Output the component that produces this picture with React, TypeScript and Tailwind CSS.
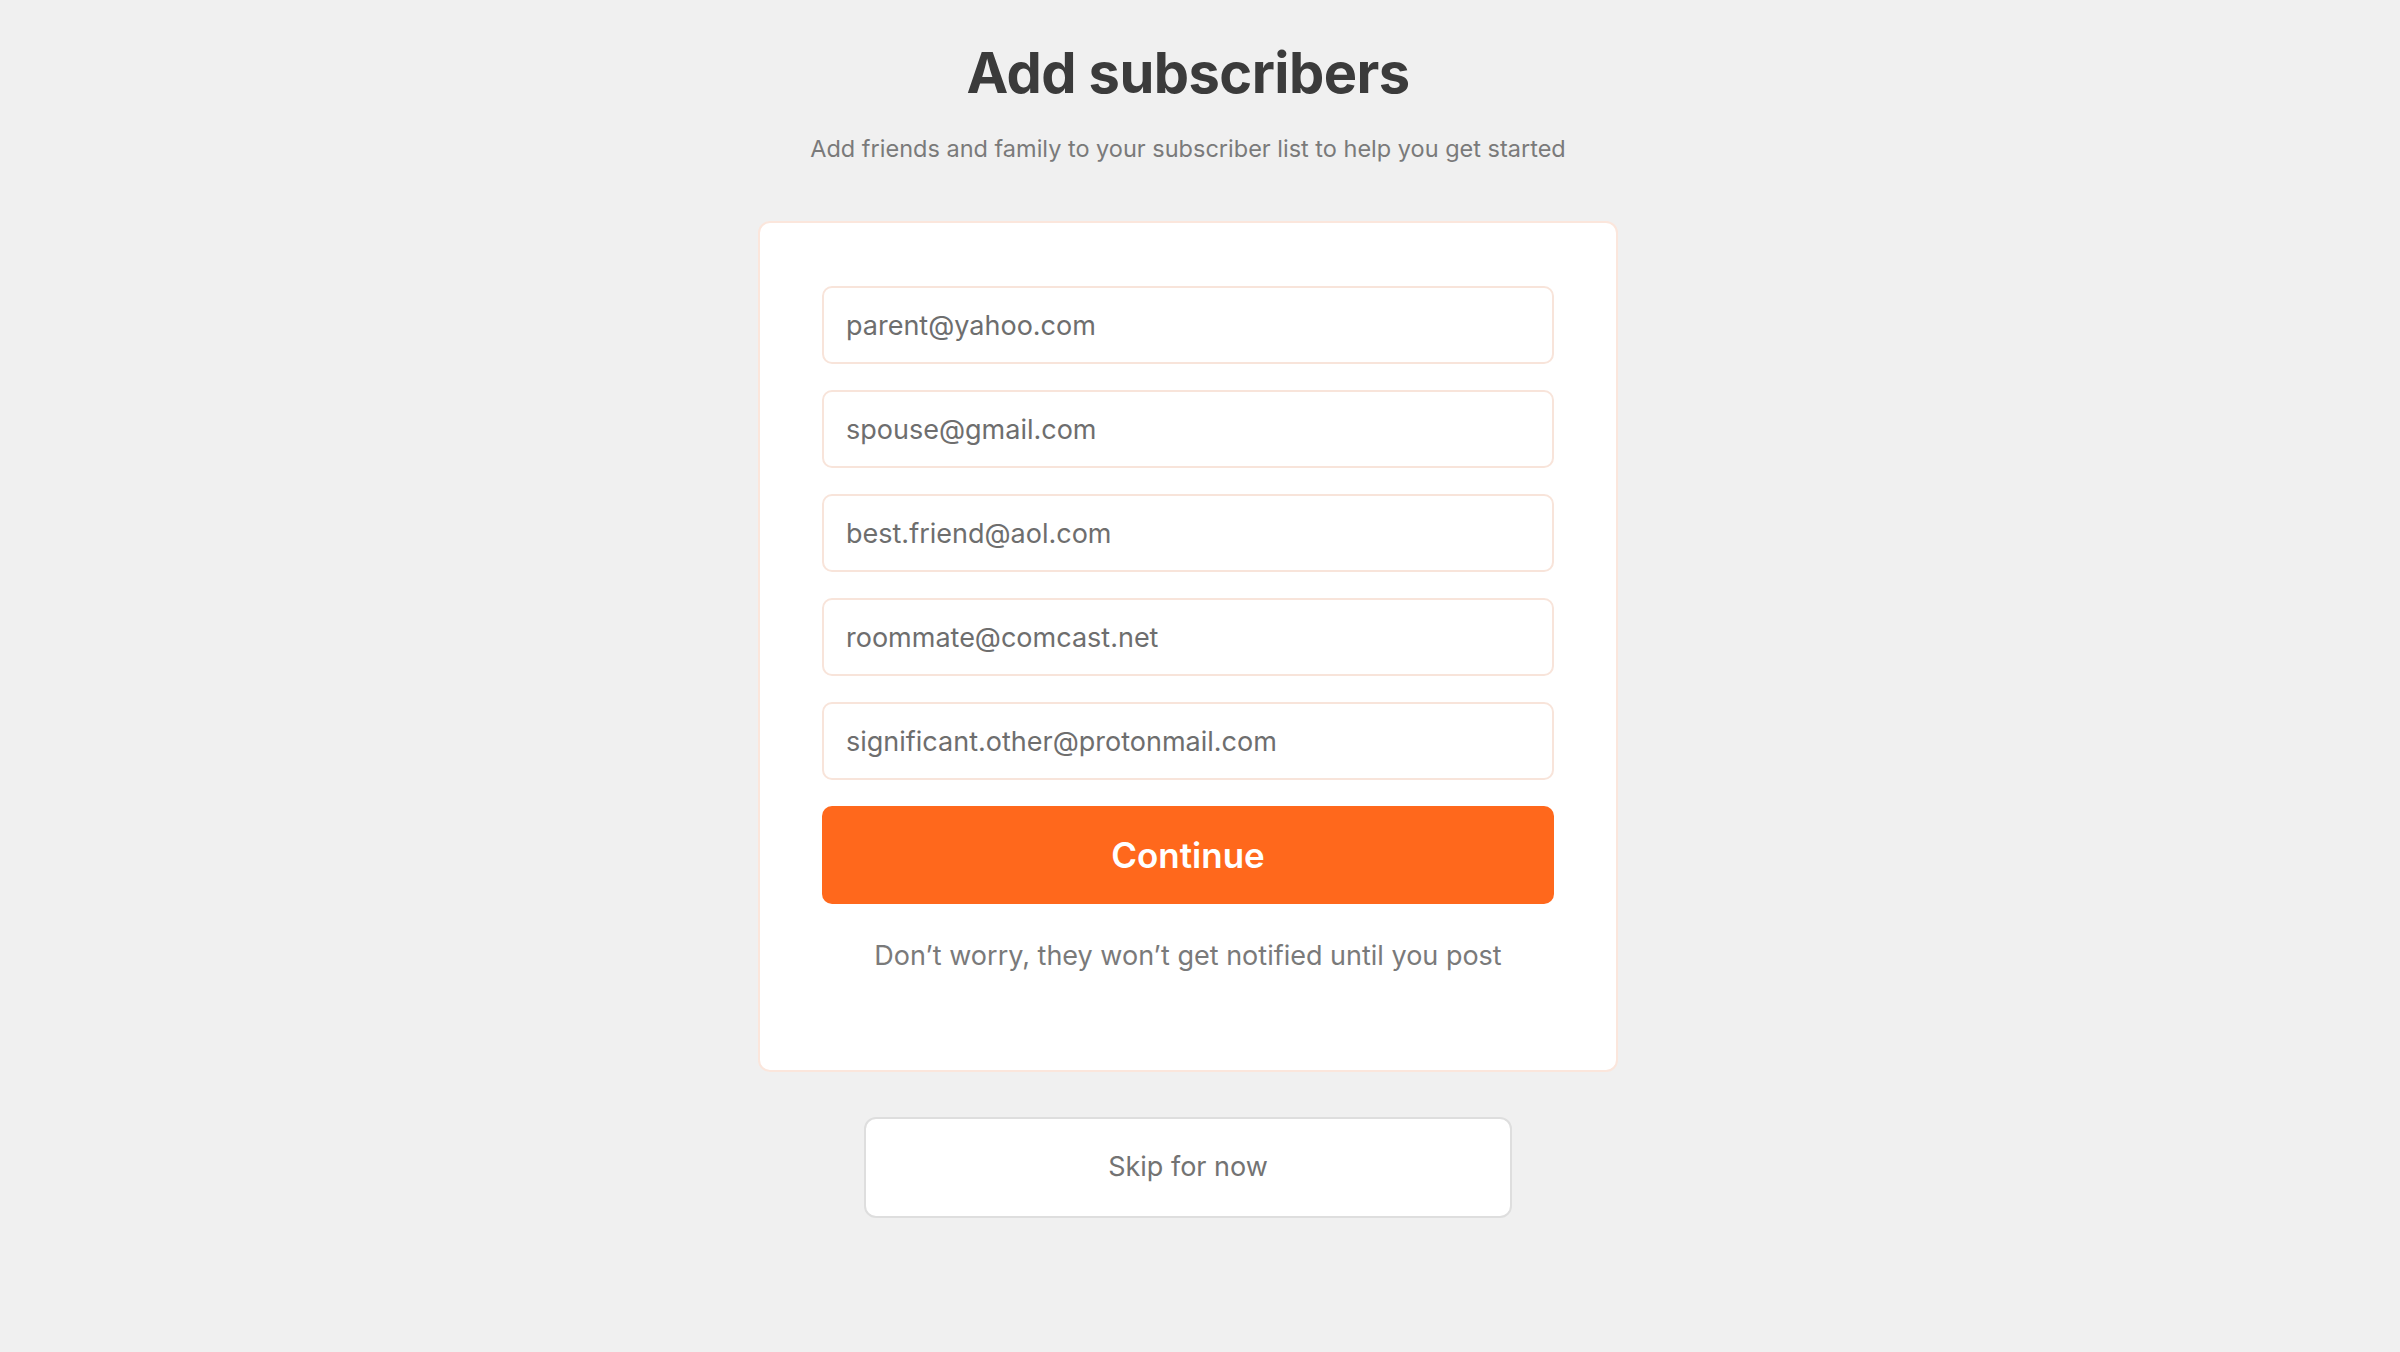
const emails = [
  "parent@yahoo.com",
  "spouse@gmail.com",
  "best.friend@aol.com",
  "roommate@comcast.net",
  "significant.other@protonmail.com",
]

export default function App() {
  return (
    <div
      className="min-h-screen bg-[#f0f0f0] flex flex-col items-center pt-[39px] pr-[24px]"
      style={{ fontFamily: "Inter, 'Noto Sans', sans-serif" }}
    >
      <h1 className="text-[56px] leading-[68px] font-bold text-[#3b3b3b] tracking-[-0.01em]">
        Add subscribers
      </h1>
      <p className="mt-[26px] text-[23.5px] leading-[32px] text-[#7a7a7a]">
        Add friends and family to your subscriber list to help you get started
      </p>

      <div className="mt-[56px] w-[860px] rounded-[12px] border-2 border-[#fbe6dc] bg-white px-[62px] pt-[63px] pb-[96px]">
        <div className="flex flex-col gap-[26px]">
          {emails.map((email) => (
            <input
              key={email}
              type="email"
              placeholder={email}
              className="h-[78px] w-full rounded-[10px] border-2 border-[#f8e4da] bg-white px-[22px] text-[27px] text-[#6e6e6e] placeholder:text-[#6e6e6e] outline-none"
            />
          ))}
          <button className="h-[98px] w-full rounded-[10px] bg-[#ff681c] text-[35px] font-semibold text-white">
            Continue
          </button>
        </div>
        <p className="mt-[34px] text-center text-[27px] leading-[36px] text-[#7a7a7a]">
          Don’t worry, they won’t get notified until you post
        </p>
      </div>

      <button className="mt-[45px] h-[101px] w-[648px] rounded-[12px] border-2 border-[#dedede] bg-white text-[27px] text-[#737373]">
        Skip for now
      </button>
    </div>
  )
}
